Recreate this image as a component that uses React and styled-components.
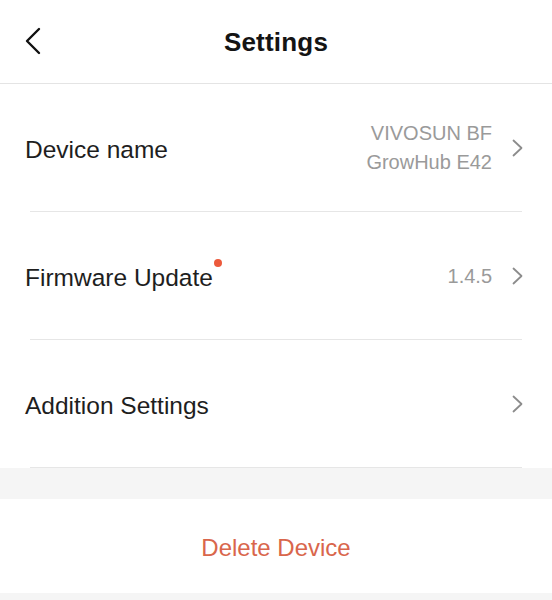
import React from "react";
import styled, { createGlobalStyle } from "styled-components";

const Global = createGlobalStyle`
  html, body { margin: 0; padding: 0; background: #ffffff; }
  body { font-family: "Liberation Sans", Arial, sans-serif; -webkit-font-smoothing: antialiased; }
  * { box-sizing: border-box; }
`;

const Page = styled.div`
  width: 552px;
  height: 600px;
  background: #f5f5f5;
  display: flex;
  flex-direction: column;
  overflow: hidden;
`;

const Header = styled.header`
  height: 84px;
  flex-shrink: 0;
  background: #fff;
  border-bottom: 1px solid #e4e4e4;
  display: grid;
  grid-template-columns: 1fr auto 1fr;
  align-items: center;
  padding: 0 25px;
`;

const BackButton = styled.button`
  justify-self: start;
  background: none;
  border: 0;
  padding: 0;
  margin-top: -2px;
  display: flex;
  cursor: pointer;
`;

const Title = styled.h1`
  margin: 2px 0 0 0;
  font-family: "Liberation Sans", Arial, sans-serif;
  font-weight: 700;
  font-size: 26px;
  color: #141414;
  letter-spacing: 0.2px;
`;

const List = styled.section`
  background: #fff;
  display: flex;
  flex-direction: column;
`;

const Row = styled.div`
  height: 127px;
  display: flex;
  align-items: center;
  padding: 5px 29px 0 25px;
  cursor: pointer;
`;

const Divider = styled.div`
  height: 1px;
  margin: 0 30px;
  background: #e6e6e6;
`;

const Label = styled.span`
  flex: 1;
  font-size: 24.5px;
  color: #1e1e1e;
`;

const LabelText = styled.span`
  position: relative;
`;

const Dot = styled.span`
  position: absolute;
  right: -9px;
  top: -5px;
  width: 8px;
  height: 8px;
  border-radius: 50%;
  background: #ec5a3c;
`;

const Value = styled.span`
  font-size: 20px;
  line-height: 29px;
  color: #9a9a9a;
  text-align: right;
  margin-right: 20px;
  margin-top: -4px;
`;

const Chevron = styled.span`
  display: flex;
  margin-top: -4px;
`;

const Gap = styled.div`
  height: 31px;
  flex-shrink: 0;
  background: #f5f5f5;
`;

const DangerBar = styled.div`
  height: 94px;
  flex-shrink: 0;
  background: #fff;
  display: flex;
  align-items: center;
  justify-content: center;
`;

const DangerButton = styled.button`
  background: none;
  border: 0;
  padding: 0;
  margin-top: 4px;
  font-family: "Liberation Sans", Arial, sans-serif;
  font-size: 24px;
  color: #d9664c;
  cursor: pointer;
`;

const BackIcon = () => (
  <svg width="16" height="28" viewBox="0 0 16 28" fill="none">
    <polyline points="14,2 2,14 14,26" stroke="#111" strokeWidth="2.4" strokeLinecap="round" strokeLinejoin="round" />
  </svg>
);

const ChevronIcon = () => (
  <svg width="11" height="18" viewBox="0 0 11 18" fill="none">
    <polyline points="1.5,1.5 9.5,9 1.5,16.5" stroke="#8c8c8c" strokeWidth="1.8" strokeLinecap="round" strokeLinejoin="round" />
  </svg>
);

const rows = [
  { label: "Device name", value: ["VIVOSUN BF", "GrowHub E42"] },
  { label: "Firmware Update", value: ["1.4.5"], dot: true },
  { label: "Addition Settings" },
];

export default function App() {
  return (
    <>
      <Global />
      <Page>
        <Header>
          <BackButton aria-label="Back">
            <BackIcon />
          </BackButton>
          <Title>Settings</Title>
          <span />
        </Header>
        <List>
          {rows.map((r) => (
            <React.Fragment key={r.label}>
              <Row>
                <Label>
                  <LabelText>
                    {r.label}
                    {r.dot && <Dot />}
                  </LabelText>
                </Label>
                {r.value && (
                  <Value>
                    {r.value.map((v) => (
                      <div key={v}>{v}</div>
                    ))}
                  </Value>
                )}
                <Chevron>
                  <ChevronIcon />
                </Chevron>
              </Row>
              <Divider />
            </React.Fragment>
          ))}
        </List>
        <Gap />
        <DangerBar>
          <DangerButton>Delete Device</DangerButton>
        </DangerBar>
      </Page>
    </>
  );
}
